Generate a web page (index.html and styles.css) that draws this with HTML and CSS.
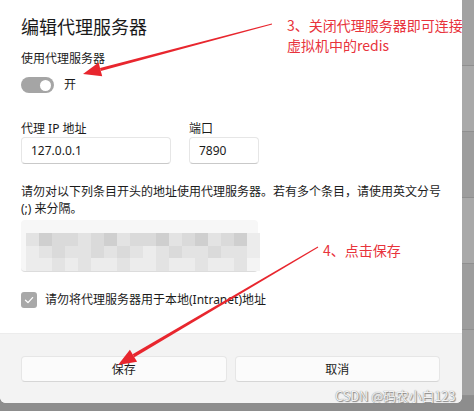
FILE: index.html
```html
<!DOCTYPE html>
<html lang="zh-CN">
<head>
<meta charset="utf-8">
<title>编辑代理服务器</title>
<link rel="stylesheet" href="styles.css">
</head>
<body>
<div class="screen">
  <div class="dialog">
    <div class="content">
      <h1 class="title">编辑代理服务器</h1>
      <div class="label">使用代理服务器</div>
      <div class="toggle-row">
        <span class="toggle"><span class="knob"></span></span>
        <span class="toggle-text">开</span>
      </div>
      <div class="fields">
        <div class="field field-ip">
          <div class="label tight">代理 IP 地址</div>
          <div class="input">127.0.0.1</div>
        </div>
        <div class="field field-port">
          <div class="label tight">端口</div>
          <div class="input">7890</div>
        </div>
      </div>
      <p class="desc">请勿对以下列条目开头的地址使用代理服务器。若有多个条目，请使用英文分号 (;) 来分隔。</p>
      <div class="textarea">
        <div class="mosaic">
          <span class="c2"></span><span class="c4"></span><span class="c3"></span><span class="c3"></span><span class="c2"></span><span class="c3"></span><span class="c4"></span><span class="c2"></span><span class="c3"></span><span class="c3"></span><span class="c4"></span><span class="c2"></span><span class="c3"></span><span class="c4"></span><span class="c2"></span><span class="c3"></span><span class="c4"></span><span class="c1"></span>
          <span class="c1"></span><span class="c2"></span><span class="c3"></span><span class="c2"></span><span class="c2"></span><span class="c3"></span><span class="c2"></span><span class="c3"></span><span class="c2"></span><span class="c1"></span><span class="c2"></span><span class="c3"></span><span class="c2"></span><span class="c2"></span><span class="c3"></span><span class="c2"></span><span class="c2"></span><span class="c1"></span>
          <span class="c1"></span><span class="c1"></span><span class="c2"></span><span class="c1"></span><span class="c2"></span><span class="c1"></span><span class="c1"></span><span class="c2"></span><span class="c1"></span><span class="c1"></span><span class="c2"></span><span class="c1"></span><span class="c1"></span><span class="c2"></span><span class="c1"></span><span class="c1"></span><span class="c2"></span><span class="c0"></span>
        </div>
      </div>
      <div class="check-row">
        <span class="checkbox">
          <svg width="16" height="16" viewBox="0 0 16 16"><path d="M4.5 8.2 L7 10.6 L11.6 5.6" fill="none" stroke="#fff" stroke-width="1.3" stroke-linecap="round" stroke-linejoin="round"/></svg>
        </span>
        <span class="check-text">请勿将代理服务器用于本地(Intranet)地址</span>
      </div>
    </div>
    <div class="footer">
      <button class="btn">保存</button>
      <button class="btn">取消</button>
    </div>
  </div>
  <div class="side">
    <div class="seg s1"></div>
    <div class="seg s2"></div>
    <div class="seg s3"></div>
    <div class="seg s2"></div>
    <div class="seg s3"></div>
    <div class="seg s1"></div>
  </div>
</div>

<div class="note note-3">3、关闭代理服务器即可连接<br>虚拟机中的redis</div>
<div class="note note-4">4、点击保存</div>
<svg class="arrows" width="474" height="411" viewBox="0 0 474 411">
  <polygon points="272.1,24.5 100.8,70.9 100,68 271.9,23.5" fill="#e8262e"/>
  <polygon points="83,74 102.2,76.2 98.6,62.6" fill="#e8262e"/>
  <polygon points="318.25,247.43 134.4,357.3 132.6,354.3 317.75,246.57" fill="#e8262e"/>
  <polygon points="118,365 137.1,361.8 129.9,349.8" fill="#e8262e"/>
</svg>
<div class="watermark">CSDN @码农小白123</div>
</body>
</html>
```

FILE: styles.css
```css
* { box-sizing: border-box; }
html, body { margin: 0; padding: 0; }
body {
  width: 474px;
  height: 411px;
  overflow: hidden;
  background: #8d8d8d;
  font-family: "Noto Sans", "Noto Sans CJK SC", sans-serif;
  color: #1b1b1b;
  position: relative;
}
.screen {
  display: flex;
  align-items: flex-start;
}
.dialog {
  width: 462px;
  height: 403px;
  background: #ffffff;
  border-radius: 0 0 6px 6px;
  display: flex;
  flex-direction: column;
  overflow: hidden;
}
.content {
  flex: 1;
  padding: 15px 21px 0 21px;
}
.title {
  margin: 0;
  font-size: 18px;
  font-weight: 400;
  line-height: 24px;
  color: #1a1a1a;
}
.label {
  margin-top: 11px;
  font-size: 12px;
  line-height: 18px;
}
.label.tight {
  margin-top: 0;
  line-height: 16px;
}
.toggle-row {
  margin-top: 9px;
  display: flex;
  align-items: center;
  height: 16px;
}
.toggle {
  width: 33px;
  height: 16px;
  border-radius: 8px;
  background: #a5a5a5;
  display: flex;
  align-items: center;
  justify-content: flex-end;
  padding-right: 3px;
}
.knob {
  width: 11px;
  height: 11px;
  border-radius: 50%;
  background: #ffffff;
}
.toggle-text {
  margin-left: 10px;
  font-size: 12px;
  line-height: 16px;
}
.fields {
  margin-top: 28px;
  display: flex;
  gap: 18px;
}
.field-ip { width: 150px; }
.field-port { width: 70px; }
.input {
  height: 27px;
  border: 1px solid #e6e6e6;
  border-bottom-color: #c9c9c9;
  border-radius: 4px;
  padding: 0 9px;
  font-size: 12px;
  line-height: 25px;
  background: #fff;
}
.desc {
  margin: 19px 0 0 0;
  font-size: 12px;
  line-height: 17px;
  width: 425px;
}
.textarea {
  margin-top: 3px;
  width: 237px;
  height: 52px;
  background: #f7f7f7;
  border-radius: 4px;
  padding: 13px 5px 0 5px;
  border-bottom: 1px solid #dcdcdc;
}
.mosaic {
  display: grid;
  grid-template-columns: repeat(18, 13px);
  grid-auto-rows: 12.5px;
}
.mosaic span { display: block; }
.c0 { background: #f4f4f4; }
.c1 { background: #ececec; }
.c2 { background: #e3e3e3; }
.c3 { background: #dadada; }
.c4 { background: #cfcfcf; }
.check-row {
  margin-top: 20px;
  display: flex;
  align-items: center;
  height: 16px;
}
.checkbox {
  width: 16px;
  height: 16px;
  border-radius: 3px;
  background: #a8a8a8;
  display: block;
}
.checkbox svg { display: block; }
.check-text {
  margin-left: 8px;
  font-size: 12px;
  line-height: 16px;
}
.footer {
  height: 70px;
  background: #f3f3f3;
  border-top: 1px solid #ececec;
  padding: 22px 22px 0 21px;
  display: flex;
  gap: 8px;
  align-items: flex-start;
}
.btn {
  flex: 1;
  height: 26px;
  background: #fbfbfb;
  border: 1px solid #e6e6e6;
  border-bottom-color: #d6d6d6;
  border-radius: 4px;
  font-family: "Noto Sans", "Noto Sans CJK SC", sans-serif;
  font-size: 12px;
  color: #1b1b1b;
  padding: 0;
}
.side {
  flex: 1;
  height: 396px;
  display: flex;
  flex-direction: column;
}
.seg { flex: 1; border-bottom: 1px solid #8f8f8f; }
.s1 { background: #a2a2a2; }
.s2 { background: #a9a9a9; }
.s3 { background: #9d9d9d; }
.note {
  position: absolute;
  color: #e8333c;
  font-family: "Noto Sans CJK SC", sans-serif;
  font-size: 14px;
  line-height: 20px;
}
.note-3 { left: 287px; top: 15px; }
.note-4 { left: 323px; top: 240px; }
.arrows {
  position: absolute;
  left: 0;
  top: 0;
}
.watermark {
  position: absolute;
  left: 335px;
  top: 387px;
  font-family: "Noto Sans CJK SC", sans-serif;
  font-size: 13px;
  line-height: 18px;
  color: #f2f2f2;
  text-shadow: 0 0 1px #777, 1px 1px 1px #888;
  letter-spacing: -0.2px;
}
```
